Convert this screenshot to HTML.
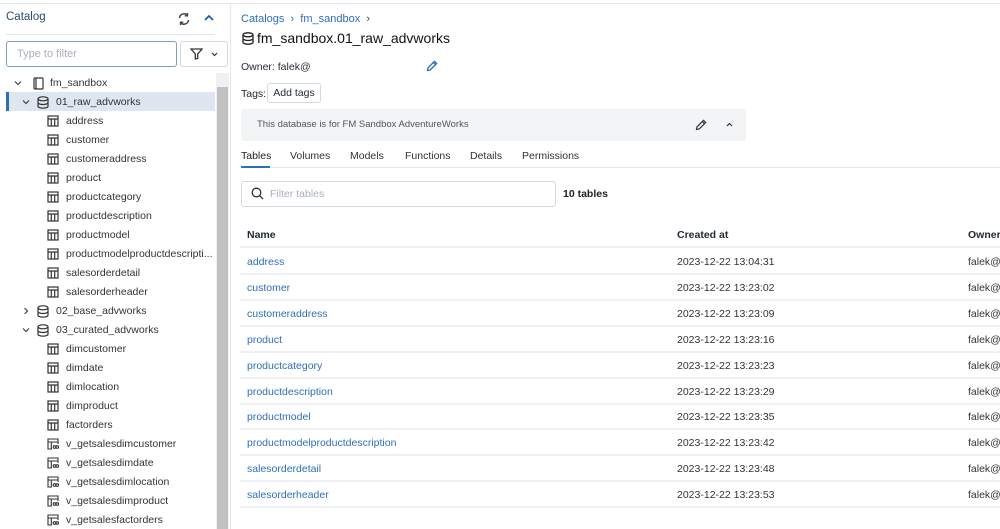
<!DOCTYPE html><html><head><style>
*{margin:0;padding:0;box-sizing:border-box}
html,body{width:1000px;height:529px;overflow:hidden}
body{background:#fff;font-family:"Liberation Sans",sans-serif;font-size:11px;color:#1f2933;position:relative}
.a{position:absolute;white-space:nowrap}
.tr{position:absolute;left:0;width:215px;height:19px;line-height:19px}
.lnk{color:#2f6fb5}
.row{position:absolute;left:240px;width:760px;height:26px;line-height:26px;border-bottom:2px solid #eef0f3}
</style></head><body>
<div class="a" style="left:0;top:3px;width:1000px;height:1px;background:#e3e6ea"></div>
<div class="a" style="left:6px;top:11px;font-size:11.5px;color:#2c4a6b">Catalog</div>
<svg class="a" style="left:177px;top:12px" width="14" height="14" viewBox="0 0 14 14" fill="none" stroke="#444" stroke-width="1.4"><path d="M2.5 6a4.5 4.5 0 0 1 8-2.5M11.5 8a4.5 4.5 0 0 1-8 2.5M10.5 1v2.8H7.7M3.5 13v-2.8h2.8"/></svg>
<svg class="a" style="left:203px;top:14px" width="12" height="8" viewBox="0 0 12 8" fill="none" stroke="#1d5fa8" stroke-width="1.8"><path d="M2 6l4-4 4 4"/></svg>
<div class="a" style="left:6px;top:34px;width:209px;height:1px;background:#e3e6ea"></div>
<div class="a" style="left:6px;top:41px;width:171px;height:26px;border:1px solid #7a9cc6;border-radius:3px;padding-left:10px;line-height:24px;color:#a7b0ba">Type to filter</div>
<div class="a" style="left:180px;top:41px;width:48px;height:26px;border:1px solid #d5d9de;border-radius:3px"></div>
<svg class="a" style="left:190px;top:48px" width="13" height="12" viewBox="0 0 13 12" fill="none" stroke="#333" stroke-width="1.3"><path d="M1 1h11L7.7 6v4.5L5.3 11V6z"/></svg>
<svg class="a" style="left:211px;top:52px" width="7" height="5" viewBox="0 0 7 5" fill="none" stroke="#333" stroke-width="1.2"><path d="M1 1l2.5 2.5L6 1"/></svg>
<div class="a" style="left:216px;top:73px;width:13px;height:456px;background:#f1f1f1"></div>
<div class="a" style="left:217px;top:87px;width:11px;height:442px;background:#c1c1c1"></div>
<div class="a" style="left:230px;top:3px;width:1px;height:526px;background:#e3e6ea"></div>
<div class="tr" style="top:92px;left:6px;width:209px;background:#dde6f1;border-left:3px solid #2f6fb5"></div>
<div id="tree"></div>
<div class="a lnk" style="left:241px;top:13px;font-size:11px">Catalogs &nbsp;›&nbsp; fm_sandbox &nbsp;<span style="color:#444">›</span></div>
<svg class="a" style="left:242px;top:32px" width="12" height="13" viewBox="0 0 12 13" fill="none" stroke="#222" stroke-width="1.3"><ellipse cx="6" cy="2.8" rx="5" ry="2"/><path d="M1 2.8v7.4c0 1.1 2.2 2 5 2s5-.9 5-2V2.8M1 6.5c0 1.1 2.2 2 5 2s5-.9 5-2"/></svg>
<div class="a" style="left:257px;top:30px;font-size:14px;color:#111">fm_sandbox.01_raw_advworks</div>
<div class="a" style="left:241px;top:61px;font-size:10.5px">Owner: falek@</div>
<svg class="a" style="left:426px;top:60px" width="12" height="12" viewBox="0 0 12 12" fill="none" stroke="#2f6fb5" stroke-width="1.3"><path d="M1.5 10.5l.5-2.7L8.5 1.3l2.2 2.2-6.5 6.5zM7.3 2.5l2.2 2.2"/></svg>
<div class="a" style="left:241px;top:88px;font-size:10.5px">Tags:</div>
<div class="a" style="left:267px;top:83px;width:54px;height:20px;border:1px solid #d5d9de;border-radius:3px;text-align:center;line-height:18px;font-size:10.5px">Add tags</div>
<div class="a" style="left:241px;top:109px;width:505px;height:32px;background:#f3f4f6;border-radius:3px"></div>
<div class="a" style="left:257px;top:119px;font-size:9.5px;color:#555">This database is for FM Sandbox AdventureWorks</div>
<svg class="a" style="left:695px;top:119px" width="12" height="12" viewBox="0 0 12 12" fill="none" stroke="#333" stroke-width="1.2"><path d="M1.5 10.5l.5-2.7L8.5 1.3l2.2 2.2-6.5 6.5zM7.3 2.5l2.2 2.2"/></svg>
<svg class="a" style="left:726px;top:122px" width="7" height="5" viewBox="0 0 7 5" fill="none" stroke="#333" stroke-width="1.2"><path d="M1 4l2.5-2.5L6 4"/></svg>
<div class="a" style="left:241px;top:150px;font-size:10.5px;color:#222">Tables</div>
<div class="a" style="left:290px;top:150px;font-size:10.5px;color:#333">Volumes</div>
<div class="a" style="left:350px;top:150px;font-size:10.5px;color:#333">Models</div>
<div class="a" style="left:405px;top:150px;font-size:10.5px;color:#333">Functions</div>
<div class="a" style="left:470px;top:150px;font-size:10.5px;color:#333">Details</div>
<div class="a" style="left:522px;top:150px;font-size:10.5px;color:#333">Permissions</div>
<div class="a" style="left:241px;top:167px;width:759px;height:1px;background:#e3e6ea"></div>
<div class="a" style="left:241px;top:166px;width:29px;height:2px;background:#2f6fb5"></div>
<div class="a" style="left:241px;top:181px;width:315px;height:26px;border:1px solid #d5d9de;border-radius:3px"></div>
<svg class="a" style="left:251px;top:187px" width="13" height="13" viewBox="0 0 13 13" fill="none" stroke="#333" stroke-width="1.3"><circle cx="5.5" cy="5.5" r="4.3"/><path d="M8.7 8.7L12 12"/></svg>
<div class="a" style="left:270px;top:188px;font-size:10.5px;color:#a7b0ba">Filter tables</div>
<div class="a" style="left:563px;top:188px;font-size:10.5px;font-weight:bold;color:#222">10 tables</div>
<div class="row" style="top:222px;font-weight:bold;font-size:10.5px"><span class="a" style="left:7px">Name</span><span class="a" style="left:437px">Created at</span><span class="a" style="left:728px">Owner</span></div>
<div id="rows"></div>
<script>
var T=[['book','fm_sandbox',1],['db','01_raw_advworks',1]];
['address','customer','customeraddress','product','productcategory','productdescription','productmodel','productmodelproductdescripti...','salesorderdetail','salesorderheader'].forEach(function(n){T.push(['t',n])});
T.push(['db','02_base_advworks',2]);T.push(['db','03_curated_advworks',1]);
['dimcustomer','dimdate','dimlocation','dimproduct','factorders'].forEach(function(n){T.push(['t',n])});
['v_getsalesdimcustomer','v_getsalesdimdate','v_getsalesdimlocation','v_getsalesdimproduct','v_getsalesfactorders'].forEach(function(n){T.push(['v',n])});
var ic={book:'<svg width="11" height="13" viewBox="0 0 11 13" fill="none" stroke="#333" stroke-width="1.2"><rect x="1" y="1" width="9" height="11" rx="1"/><path d="M3 1v11"/></svg>',
db:'<svg width="12" height="13" viewBox="0 0 12 13" fill="none" stroke="#333" stroke-width="1.2"><ellipse cx="6" cy="2.8" rx="5" ry="2"/><path d="M1 2.8v7.4c0 1.1 2.2 2 5 2s5-.9 5-2V2.8M1 6.5c0 1.1 2.2 2 5 2s5-.9 5-2"/></svg>',
t:'<svg width="12" height="12" viewBox="0 0 12 12" fill="none" stroke="#333" stroke-width="1.2"><rect x="1" y="1" width="10" height="10"/><path d="M1 4h10M4.3 4v7M7.7 4v7"/></svg>',
v:'<svg width="12" height="12" viewBox="0 0 12 12" fill="none" stroke="#333" stroke-width="1.1"><path d="M11 6V1H1v10h4M1 4h10M4.3 4v7"/><circle cx="7.5" cy="9" r="1.3"/><circle cx="10.3" cy="9" r="1.3"/></svg>'};
var h='';T.forEach(function(r,i){var y=74+i*19;var x=r[0]=='book'?33:r[0]=='db'?37:47;
if(r[2]){var ax=r[0]=='book'?14:22;h+='<svg class="a" style="left:'+ax+'px;top:'+(y+6)+'px" width="8" height="6" viewBox="0 0 8 6" fill="none" stroke="#444" stroke-width="1.2"><path d="'+(r[2]==1?'M1 1.5l3 3 3-3':'M2.5 0l3 3-3 3')+'"/></svg>';}
var tx=x+(r[0]=='book'?17:19);
h+='<div class="a" style="left:'+x+'px;top:'+(y+3)+'px">'+ic[r[0]]+'</div><div class="a" style="left:'+tx+'px;top:'+(y+3)+'px;font-size:10.5px;color:#333">'+r[1]+'</div>';});
document.getElementById('tree').innerHTML=h;
var R=[['address','13:04:31'],['customer','13:23:02'],['customeraddress','13:23:09'],['product','13:23:16'],['productcategory','13:23:23'],['productdescription','13:23:29'],['productmodel','13:23:35'],['productmodelproductdescription','13:23:42'],['salesorderdetail','13:23:48'],['salesorderheader','13:23:53']];
var s='';R.forEach(function(r,i){s+='<div class="row" style="top:'+(249+i*25.9)+'px;font-size:10.5px"><span class="a lnk" style="left:7px">'+r[0]+'</span><span class="a" style="left:437px;color:#333">2023-12-22 '+r[1]+'</span><span class="a" style="left:728px;color:#333">falek@</span></div>'});
document.getElementById('rows').innerHTML=s;
</script>
</body></html>
